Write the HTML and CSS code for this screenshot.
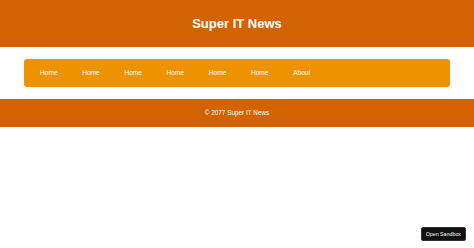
FILE: index.html
```html
<!DOCTYPE html>
<html>
<head>
<meta charset="utf-8">
<link rel="stylesheet" href="styles.css">
</head>
<body>
<header class="site-header">
  <h1 class="site-title">Super IT News</h1>
</header>
<div class="nav-wrap">
  <nav class="nav">
    <a class="nav-link" href="#">Home</a>
    <a class="nav-link" href="#">Home</a>
    <a class="nav-link" href="#">Home</a>
    <a class="nav-link" href="#">Home</a>
    <a class="nav-link" href="#">Home</a>
    <a class="nav-link" href="#">Home</a>
    <a class="nav-link" href="#">About</a>
  </nav>
</div>
<footer class="site-footer">
  <p class="footer-text">© 2077 Super IT News</p>
</footer>
<button class="sandbox-btn">Open Sandbox</button>
</body>
</html>
```

FILE: styles.css
```css
html, body {
  margin: 0;
  padding: 0;
  background: #ffffff;
  font-family: "Liberation Sans", Arial, sans-serif;
}
.site-header {
  background: #d36200;
  height: 47px;
  display: flex;
  align-items: center;
  justify-content: center;
}
.site-title {
  margin: 0;
  color: #ffffff;
  font-size: 13px;
  font-weight: bold;
  line-height: 1;
}
.nav-wrap {
  padding: 12px 24px;
}
.nav {
  background: #ee9200;
  border-radius: 3px;
  height: 28px;
  display: flex;
  align-items: center;
  padding: 1px 0 0 16px;
  box-sizing: border-box;
  gap: 24.6px;
}
.nav-link {
  color: #ffffff;
  text-decoration: none;
  font-size: 6.6px;
  line-height: 1;
}
.site-footer {
  background: #d36200;
  height: 28px;
  display: flex;
  align-items: center;
  justify-content: center;
}
.footer-text {
  margin: 0;
  color: #ffffff;
  font-size: 6.4px;
  line-height: 1;
}
.sandbox-btn {
  position: fixed;
  right: 8px;
  bottom: 7px;
  background: #111111;
  color: #ffffff;
  border: 1px solid #333333;
  border-radius: 2px;
  font-family: "Liberation Sans", Arial, sans-serif;
  font-size: 5.3px;
  padding: 3px 4px;
  line-height: 1.2;
}
```
